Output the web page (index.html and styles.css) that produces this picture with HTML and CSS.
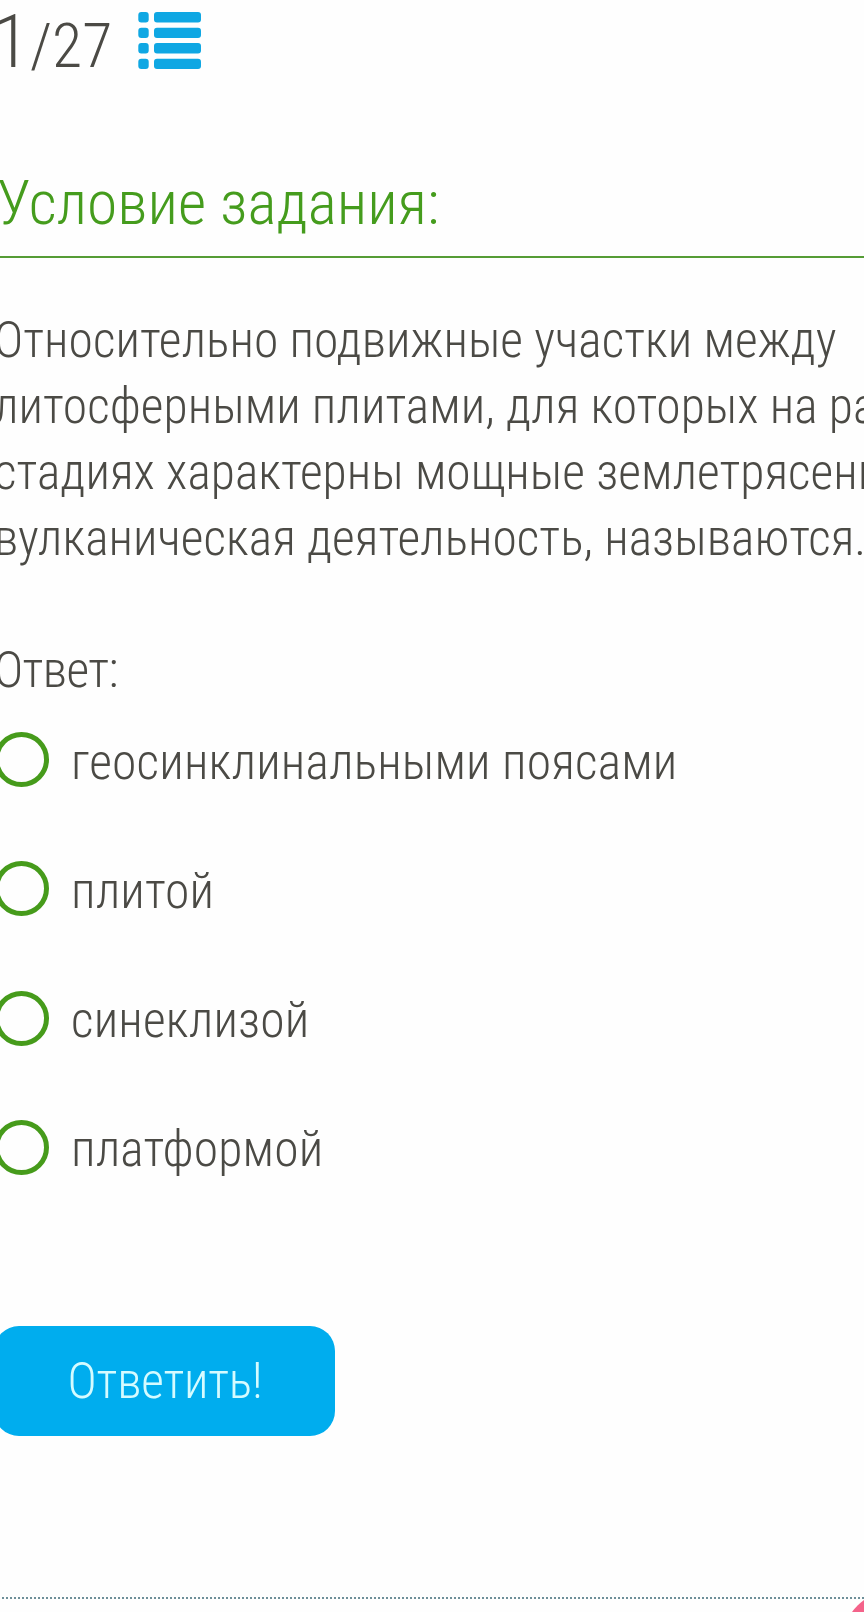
FILE: index.html
```
<!DOCTYPE html>
<html lang="ru">
<head>
    <meta charset="UTF-8">
    <meta name="viewport" content="width=device-width, initial-scale=1.0">
    <title>Условие задания</title>
    <link rel="stylesheet" href="styles.css">
</head>
<body>
    <div class="page">
        <div class="task-nav">
            <div class="counter"><span class="current">1</span>/27</div>
            <svg class="list-icon" width="63" height="58" viewBox="0 0 63 58" fill="#0fa7e3">
                <rect x="0.3" y="0" width="10.4" height="10.4" rx="3"/>
                <rect x="16" y="0" width="47" height="10.4" rx="3"/>
                <rect x="0.3" y="15.7" width="10.4" height="10.4" rx="3"/>
                <rect x="16" y="15.7" width="47" height="10.4" rx="3"/>
                <rect x="0.3" y="31" width="10.4" height="10.4" rx="3"/>
                <rect x="16" y="31" width="47" height="10.4" rx="3"/>
                <rect x="0.3" y="46.7" width="10.4" height="10.4" rx="3"/>
                <rect x="16" y="46.7" width="47" height="10.4" rx="3"/>
            </svg>
        </div>

        <h2 class="title">Условие задания:</h2>

        <p class="task-text">
            Относительно подвижные участки между<br>
            литосферными плитами, для которых на ранних<br>
            стадиях характерны мощные землетрясения и<br>
            вулканическая деятельность, называются...
        </p>
        <p class="answer-title">Ответ:</p>

        <form class="answers">
            <label class="answer"><input type="radio" name="answer"><span>геосинклинальными поясами</span></label>
            <label class="answer"><input type="radio" name="answer"><span>плитой</span></label>
            <label class="answer"><input type="radio" name="answer"><span>синеклизой</span></label>
            <label class="answer"><input type="radio" name="answer"><span>платформой</span></label>
            <button type="button" class="submit">Ответить!</button>
        </form>

        <div class="divider"></div>
        <div class="help-button"></div>
    </div>
</body>
</html>
```
FILE: styles.css
```
* {
    box-sizing: border-box;
}
body {
    margin: 0;
    background-color: #fefefe;
    color: #4b4a45;
    font-family: "Roboto Condensed", Roboto, sans-serif;
    font-weight: 300;
    font-size: 49.5px;
    line-height: 66px;
}
.page {
    position: relative;
    height: 1612px;
    overflow: hidden;
}
.task-nav {
    display: flex;
    align-items: flex-start;
    height: 165px;
}
.counter {
    width: 145px;
    margin-left: -7px;
    font-size: 62px;
    line-height: 82px;
    white-space: nowrap;
}
.current {
    font-size: 75px;
    letter-spacing: 0.5px;
}
.list-icon {
    margin-top: 12px;
}
.title {
    height: 93px;
    margin: 0 0 49px -3px;
    padding-top: 2px;
    border-bottom: 2px solid #559c35;
    color: #459c1d;
    font-size: 61.6px;
    font-weight: 300;
    line-height: 72px;
}
.task-text {
    margin: 0 0 66px -6px;
    letter-spacing: 0.05px;
    white-space: nowrap;
}
.answer-title {
    margin: 0 0 0 -6px;
    letter-spacing: -0.6px;
}
.answers {
    margin: 23.5px 0 0 -6px;
}
.answer {
    display: flex;
    align-items: center;
    height: 66px;
    margin-bottom: 63.3px;
}
.answer input {
    appearance: none;
    flex: none;
    width: 55px;
    height: 55px;
    margin: 0 22px 0 0;
    border: 5px solid #469b1b;
    border-radius: 50%;
}
.answer span {
    padding-top: 4px;
    letter-spacing: 0.2px;
}
.submit {
    display: block;
    width: 341px;
    height: 110px;
    margin-top: 145.5px;
    padding: 0 0 0 1px;
    border: none;
    border-radius: 25px;
    background-color: #00adee;
    color: #d5fbff;
    font: inherit;
    letter-spacing: -0.2px;
    cursor: pointer;
}
.divider {
    height: 2px;
    margin-top: 161px;
    background: repeating-linear-gradient(to right, transparent 0 2px, #6e8f98 2px 4px);
}
.help-button {
    position: absolute;
    left: 840px;
    top: 1588px;
    width: 120px;
    height: 120px;
    border-radius: 50%;
    background-color: #f4638a;
}
```
